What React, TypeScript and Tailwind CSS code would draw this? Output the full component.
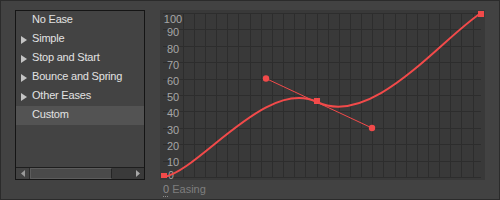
import { ReactNode } from "react";

const font = { fontFamily: '"Liberation Sans", Arial, sans-serif' };

const items = [
  { label: "No Ease", folder: false },
  { label: "Simple", folder: true },
  { label: "Stop and Start", folder: true },
  { label: "Bounce and Spring", folder: true },
  { label: "Other Eases", folder: true },
  { label: "Custom", folder: false, selected: true },
];

const Arrow = ({ dir, color }: { dir: "left" | "right"; color: string }) => (
  <svg width="4" height="7" viewBox="0 0 4 7">
    <polygon
      points={dir === "right" ? "0,0 4,3.5 0,7" : "4,0 0,3.5 4,7"}
      fill={color}
    />
  </svg>
);

const EaseList = () => (
  <div className="w-[130px] h-[170px] border border-[#151515] bg-[#434343] flex flex-col">
    <div className="flex-1">
      {items.map((item) => (
        <div
          key={item.label}
          className={`h-[19px] flex items-center pl-[5px] ${
            item.selected ? "bg-[#535353]" : ""
          }`}
        >
          <div className="w-[6px] h-[8px] flex items-center">
            {item.folder && (
              <svg width="6" height="8" viewBox="0 0 6 8">
                <polygon points="0,0 6,4 0,8" fill="#c4c4c4" />
              </svg>
            )}
          </div>
          <span className="ml-[5px] text-[11px] text-[#e2e2e2] leading-none -mt-[2px] tracking-[-0.2px]">
            {item.label}
          </span>
        </div>
      ))}
    </div>
    <div className="h-[12px] border-t border-[#1e1e1e] flex">
      <div className="w-[14px] flex items-center justify-center border-r border-[#2a2a2a]">
        <Arrow dir="left" color="#9a9a9a" />
      </div>
      <div className="w-[82px] bg-[#4a4a4a] border border-[#5c5c5c] border-r-[#252525]" />
      <div className="flex-1 bg-[#3a3a3a] flex items-center justify-end pr-[4px]">
        <Arrow dir="right" color="#a8a8a8" />
      </div>
    </div>
  </div>
);

const labels: [string, number][] = [
  ["100", 18.5],
  ["90", 32],
  ["80", 49],
  ["70", 65],
  ["60", 81],
  ["50", 97],
  ["40", 113],
  ["30", 130],
  ["20", 146],
  ["10", 162],
];

const red = "#f24a4a";

const EaseChart = () => {
  const hLines: ReactNode[] = [];
  for (let k = 0; k <= 10; k++) {
    const y = Math.round(13 + 16.4 * k) + 0.5;
    hLines.push(
      <line key={"h" + k} x1={163} x2={481} y1={y} y2={y} stroke="#2d2d2d" />
    );
  }
  const vLines: ReactNode[] = [];
  for (let k = 0; k <= 26; k++) {
    const x = Math.round(182.7 + 11.15 * k) + 0.5;
    vLines.push(
      <line key={"v" + k} x1={x} x2={x} y1={13} y2={177} stroke="#2d2d2d" />
    );
  }
  return (
    <svg
      width="325"
      height="170"
      viewBox="160 10 325 170"
      className="block bg-[#393939]"
    >
      {hLines}
      {vLines}
      {labels.map(([t, y]) => (
        <text
          key={t}
          x={173}
          y={y}
          textAnchor="middle"
          dominantBaseline="central"
          fontSize="11"
          fill="#a6a6a6"
          style={font}
        >
          {t}
        </text>
      ))}
      <text
        x={171}
        y={175.5}
        textAnchor="middle"
        dominantBaseline="central"
        fontSize="10"
        fill="#a6a6a6"
        style={font}
      >
        0
      </text>
      <line x1={266} y1={78.5} x2={372} y2={128} stroke={red} strokeWidth="1" />
      <path
        d="M164 177 C200 170 266 78 317 102 C372 128 440 40 481 13"
        fill="none"
        stroke={red}
        strokeWidth="2"
      />
      <circle cx={266} cy={78.5} r={3.2} fill={red} />
      <circle cx={372} cy={128} r={3.2} fill={red} />
      <rect x={314} y={98} width={6} height={6} fill={red} />
      <rect x={161} y={173} width={6} height={5} fill={red} />
      <rect x={478} y={11} width={6} height={6} fill={red} />
    </svg>
  );
};

export default function App() {
  return (
    <div
      className="w-[500px] h-[200px] border border-[#2b2b2b] bg-[#424242] flex pl-[14px] pt-[9px] gap-[15px]"
      style={font}
    >
      <EaseList />
      <div className="flex flex-col">
        <EaseChart />
        <div className="pl-[3px] mt-[3px] text-[11px] leading-[13px] text-[#7e7e7e]">
          <span className="text-[#8c8c8c] underline decoration-dotted underline-offset-[3px]">
            0
          </span>{" "}
          Easing
        </div>
      </div>
    </div>
  );
}
